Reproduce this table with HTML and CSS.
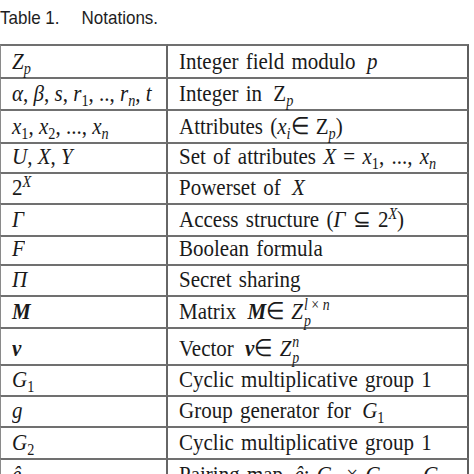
FILE: index.html
```html
<!DOCTYPE html>
<html>
<head>
<meta charset="utf-8">
<title>Table 1. Notations.</title>
<link rel="stylesheet" href="styles.css">
</head>
<body>
<div class="caption"><span class="t"><span class="cap-num">Table 1.</span><span class="cap-title">Notations.</span></span></div>
<table class="notations">
  <tr class="h33"><td class="sym"><span class="t"><i>Z</i><span class="sb"><i>p</i></span></span></td><td class="desc"><span class="t">Integer field modulo <i class="gap">p</i></span></td></tr>
  <tr class="h32"><td class="sym"><span class="t"><i>α</i>, <i>β</i>, <i>s</i>, <i>r</i><span class="sb">1</span>, .., <i>r</i><span class="sb"><i>n</i></span>, <i>t</i></span></td><td class="desc"><span class="t">Integer in <span class="gap">Z</span><span class="sb"><i>p</i></span></span></td></tr>
  <tr class="h33"><td class="sym"><span class="t"><i>x</i><span class="sb">1</span>, <i>x</i><span class="sb">2</span>, ..., <i>x</i><span class="sb"><i>n</i></span></span></td><td class="desc"><span class="t">Attributes (<i>x</i><span class="sb"><i>i</i></span>∈ Z<span class="sb"><i>p</i></span>)</span></td></tr>
  <tr class="h30"><td class="sym"><span class="t"><i>U</i>, <i>X</i>, <i>Y</i></span></td><td class="desc"><span class="t">Set of attributes <i>X</i> = <i>x</i><span class="sb">1</span>, ..., <i>x</i><span class="sb"><i>n</i></span></span></td></tr>
  <tr class="h31"><td class="sym"><span class="t">2<span class="sp"><i>X</i></span></span></td><td class="desc"><span class="t">Powerset of <i class="gap">X</i></span></td></tr>
  <tr class="h32"><td class="sym"><span class="t"><i>Γ</i></span></td><td class="desc"><span class="t">Access structure (<i>Γ</i> ⊆ 2<span class="sp"><i>X</i></span>)</span></td></tr>
  <tr class="h27"><td class="sym"><span class="t"><i>F</i></span></td><td class="desc"><span class="t">Boolean formula</span></td></tr>
  <tr class="h31"><td class="sym"><span class="t"><i>Π</i></span></td><td class="desc"><span class="t">Secret sharing</span></td></tr>
  <tr class="h32"><td class="sym"><span class="t"><b><i>M</i></b></span></td><td class="desc"><span class="t">Matrix <b><i class="gap">M</i></b>∈ <i>Z</i><span class="subsup"><span class="sup"><i>l</i> × <i>n</i></span><span class="sub"><i>p</i></span></span></span></td></tr>
  <tr class="h37"><td class="sym"><span class="t"><b><i>v</i></b></span></td><td class="desc"><span class="t">Vector <b><i class="gap">v</i></b>∈ <i>Z</i><span class="subsup"><span class="sup"><i>n</i></span><span class="sub"><i>p</i></span></span></span></td></tr>
  <tr class="h31"><td class="sym"><span class="t"><i>G</i><span class="sb">1</span></span></td><td class="desc"><span class="t">Cyclic multiplicative group 1</span></td></tr>
  <tr class="h31"><td class="sym"><span class="t"><i>g</i></span></td><td class="desc"><span class="t">Group generator for <i class="gap">G</i><span class="sb">1</span></span></td></tr>
  <tr class="h32"><td class="sym"><span class="t"><i>G</i><span class="sb">2</span></span></td><td class="desc"><span class="t">Cyclic multiplicative group 1</span></td></tr>
  <tr class="h32"><td class="sym"><span class="t"><i>ê</i></span></td><td class="desc"><span class="t">Pairing map <i class="gap">ê</i>: <i>G</i><span class="sb">1</span> × <i>G</i><span class="sb">1</span> → <i>G</i><span class="sb">2</span></span></td></tr>
</table>
</body>
</html>
```
FILE: styles.css
```css
html, body {
  margin: 0;
  padding: 0;
  background: #ffffff;
}
body {
  width: 474px;
  height: 474px;
  overflow: hidden;
}
.t {
  display: inline-block;
  transform: scaleY(1.13);
  transform-origin: 0 75%;
}
.caption {
  box-sizing: border-box;
  height: 44px;
  padding-top: 9px;
  font-family: "Liberation Sans", Arial, sans-serif;
  font-size: 17px;
  line-height: 20px;
  color: #1e1e1e;
  white-space: nowrap;
}
.cap-num {
  margin-right: 22px;
}
.notations {
  border-collapse: separate;
  border-spacing: 0;
  width: 469px;
  table-layout: fixed;
  font-family: "Liberation Serif", "Times New Roman", serif;
  font-size: 21px;
  line-height: 24px;
  color: #1a1a1a;
}
.notations td {
  box-sizing: border-box;
  border-top: 2px solid #707070;
  vertical-align: bottom;
  padding: 0 0 3px 11px;
  white-space: nowrap;
}
.notations td.sym {
  width: 168px;
  border-left: 1px solid #8a8a8a;
  border-right: 2px solid #666666;
}
.notations td.desc {
  border-right: 2px solid #5e5e5e;
  word-spacing: 2px;
}
.h27 td { height: 27px; }
.h30 td { height: 30px; }
.h31 td { height: 31px; }
.h32 td { height: 32px; }
.h33 td { height: 33px; }
.h37 td { height: 37px; }
.gap {
  margin-left: 4px;
}
.sb {
  font-size: 0.68em;
  line-height: 0;
  vertical-align: -0.32em;
}
.sp {
  font-size: 0.68em;
  line-height: 0;
  vertical-align: 0.5em;
}
.subsup {
  display: inline-flex;
  flex-direction: column;
  font-size: 0.66em;
  line-height: 14px;
  vertical-align: 0.6em;
  margin: -12px 0 -12px 1px;
  word-spacing: 0;
}
.subsup .sup,
.subsup .sub {
  display: block;
}
```
